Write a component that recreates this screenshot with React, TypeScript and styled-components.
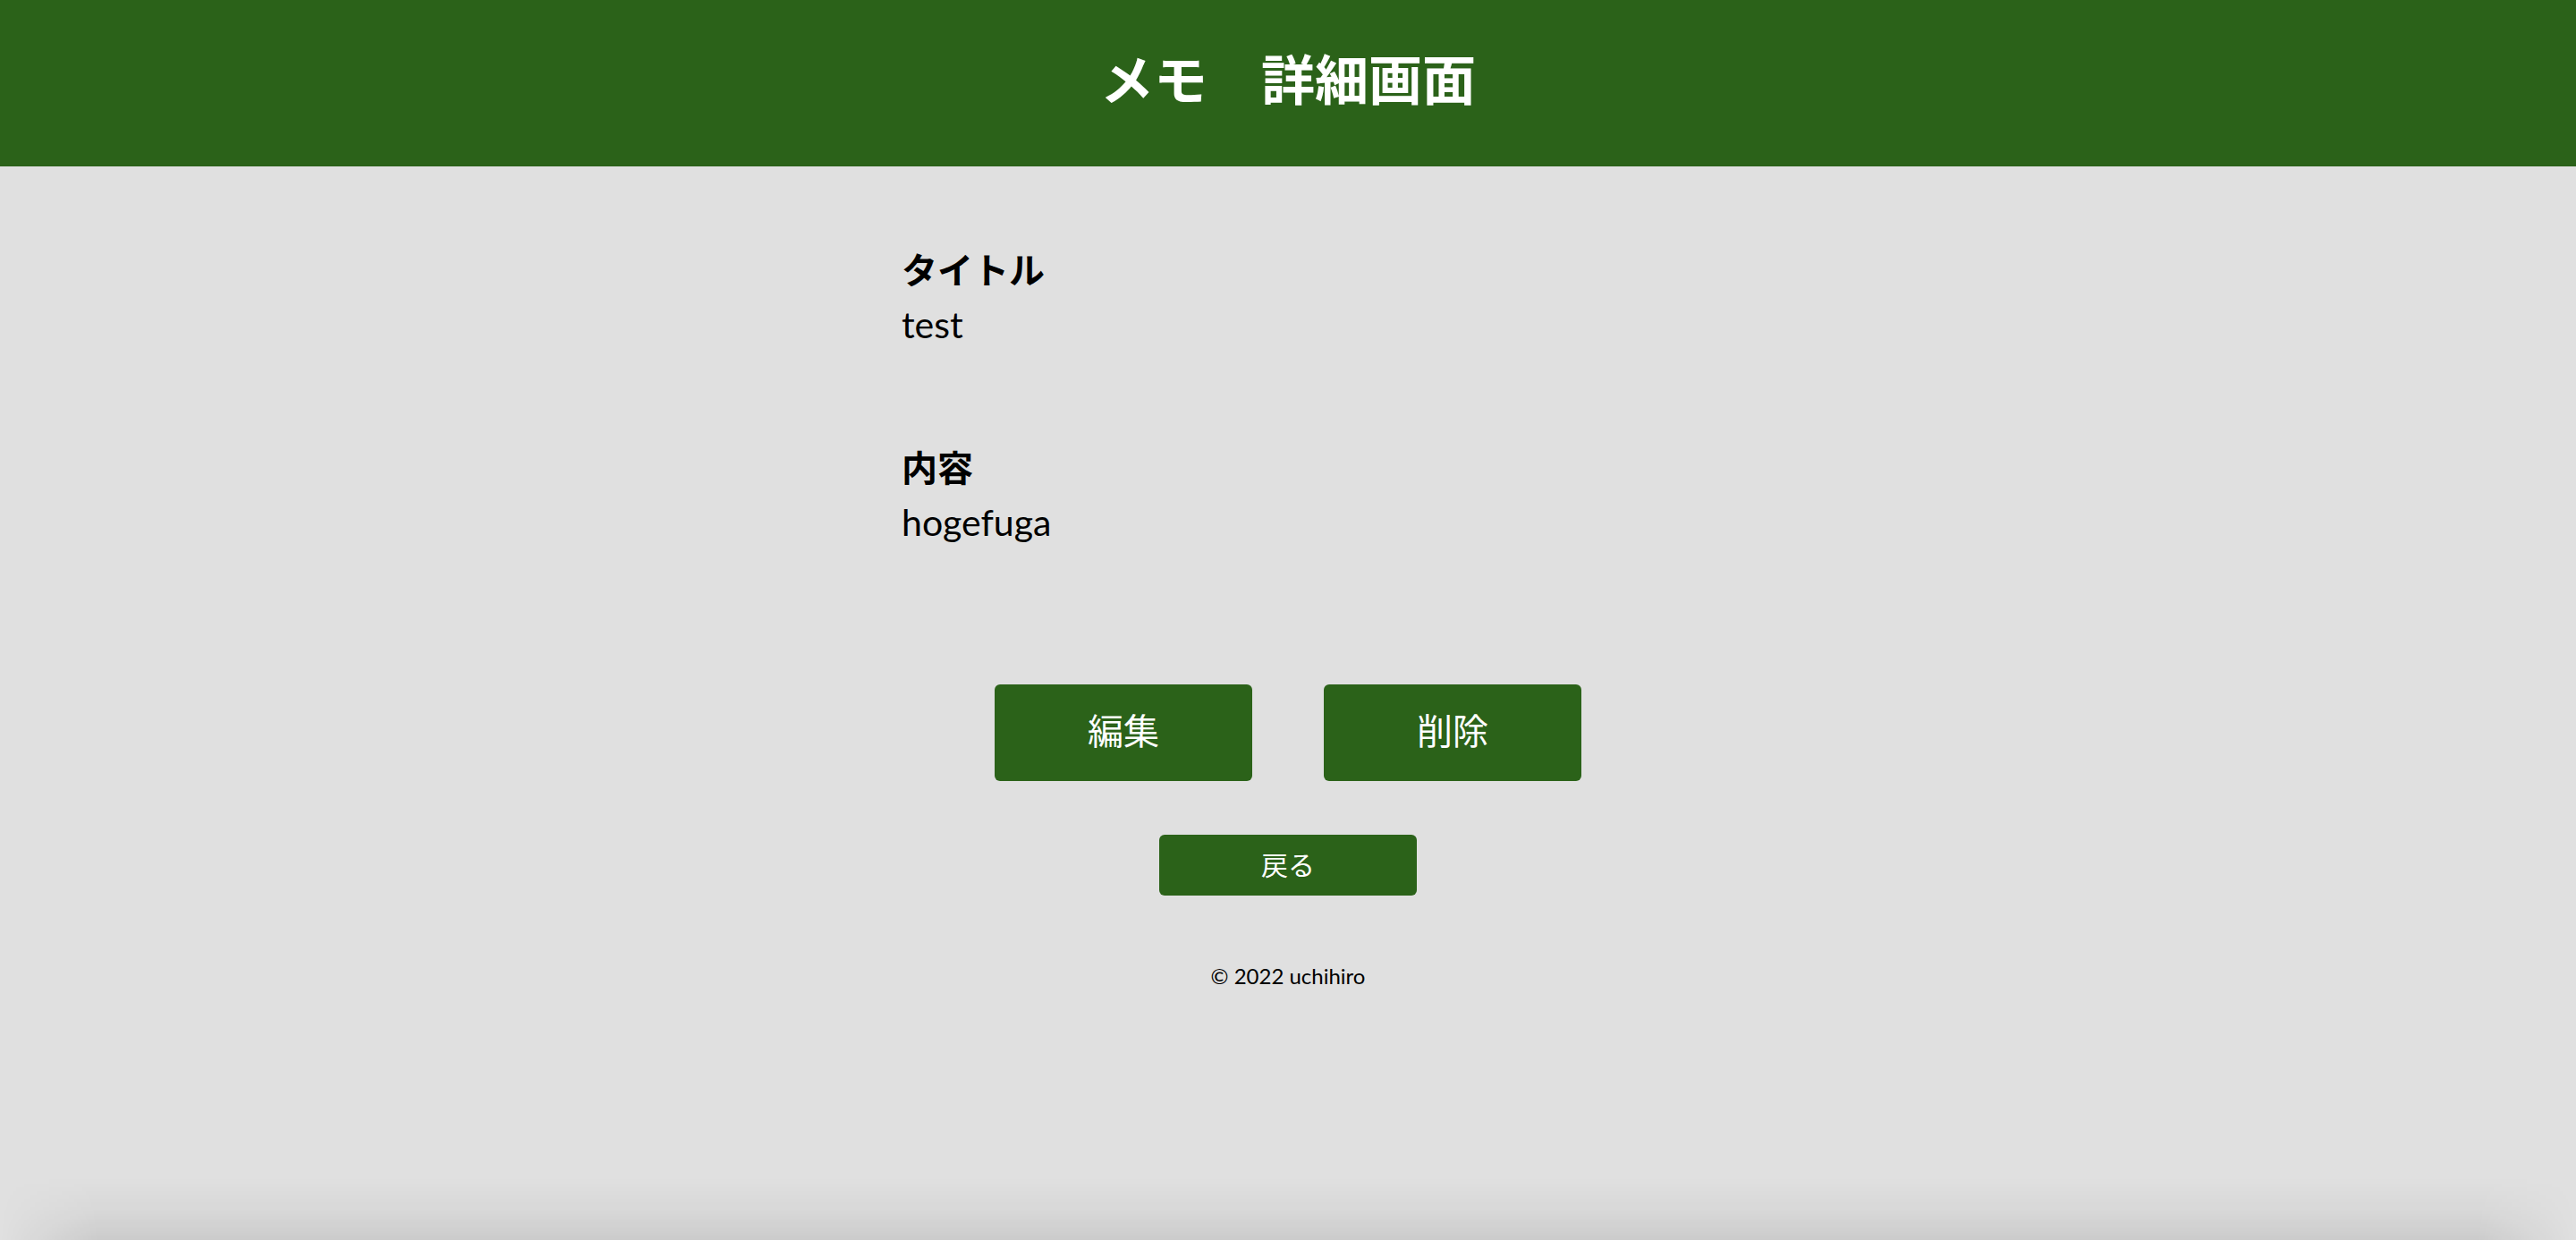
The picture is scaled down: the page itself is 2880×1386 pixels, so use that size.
import React from "react";
import styled, { createGlobalStyle } from "styled-components";

const GREEN = "#2b6219";

const GlobalStyle = createGlobalStyle`
  html, body {
    margin: 0;
    padding: 0;
    background: #e0e0e0;
  }
  body {
    font-family: "Lato", "Noto Sans CJK JP", sans-serif;
    color: #000;
  }
  * { box-sizing: border-box; }
`;

const Page = styled.div`
  min-height: 100vh;
  display: flex;
  flex-direction: column;
  background: #e0e0e0;
`;

const Header = styled.header`
  height: 186px;
  background: ${GREEN};
  display: flex;
  align-items: center;
  justify-content: center;
  padding-bottom: 14px;
`;

const Title = styled.h1`
  margin: 0;
  font-family: "Noto Sans CJK JP", sans-serif;
  font-size: 60px;
  line-height: 1;
  font-weight: 700;
  color: #fff;
  white-space: pre;
`;

const Main = styled.main`
  width: 864px;
  margin: 0 auto;
  padding-top: 94px;
  display: flex;
  flex-direction: column;
`;

const Field = styled.section<{ $gapAfter?: number }>`
  display: flex;
  flex-direction: column;
  gap: 22px;
  margin-bottom: ${(p) => p.$gapAfter ?? 0}px;
`;

const Label = styled.h3`
  margin: 0;
  font-family: "Noto Sans CJK JP", sans-serif;
  font-size: 40px;
  line-height: 1;
  font-weight: 700;
`;

const Value = styled.p`
  margin: 0;
  font-family: "Lato", "Noto Sans CJK JP", sans-serif;
  font-size: 41px;
  line-height: 1;
  font-weight: 400;
`;

const Actions = styled.div`
  display: flex;
  flex-direction: column;
  align-items: center;
  gap: 60px;
  margin-top: 161px;
`;

const ButtonRow = styled.div`
  display: flex;
  justify-content: center;
  gap: 80px;
`;

const Button = styled.button<{ $small?: boolean }>`
  width: 288px;
  height: ${(p) => (p.$small ? 68 : 108)}px;
  background: ${GREEN};
  color: #fff;
  border: none;
  border-radius: 6px;
  font-family: "Noto Sans CJK JP", sans-serif;
  font-size: ${(p) => (p.$small ? 30 : 40)}px;
  font-weight: 400;
  line-height: 1;
  display: flex;
  align-items: center;
  justify-content: center;
  padding: 0 0 ${(p) => (p.$small ? 4 : 8)}px;
  cursor: pointer;
`;

const Footer = styled.footer`
  margin-top: 78px;
  text-align: center;
  font-family: "Lato", sans-serif;
  font-size: 24px;
  line-height: 1;
  color: #000;
`;

const Spacer = styled.div`
  flex: 1;
`;

const BottomShade = styled.div`
  height: 70px;
  background: linear-gradient(
    to bottom,
    rgba(0, 0, 0, 0) 0%,
    rgba(0, 0, 0, 0.03) 50%,
    rgba(0, 0, 0, 0.09) 100%
  );
  -webkit-mask-image: linear-gradient(
    to right,
    transparent 0,
    #000 110px,
    #000 calc(100% - 110px),
    transparent 100%
  );
  mask-image: linear-gradient(
    to right,
    transparent 0,
    #000 110px,
    #000 calc(100% - 110px),
    transparent 100%
  );
`;

export default function App() {
  return (
    <>
      <GlobalStyle />
      <Page>
        <Header>
          <Title>{"メモ　詳細画面"}</Title>
        </Header>
        <Main>
          <Field $gapAfter={118}>
            <Label>タイトル</Label>
            <Value>test</Value>
          </Field>
          <Field>
            <Label>内容</Label>
            <Value>hogefuga</Value>
          </Field>
        </Main>
        <Actions>
          <ButtonRow>
            <Button>編集</Button>
            <Button>削除</Button>
          </ButtonRow>
          <Button $small>戻る</Button>
        </Actions>
        <Footer>© 2022 uchihiro</Footer>
        <Spacer />
        <BottomShade />
      </Page>
    </>
  );
}
